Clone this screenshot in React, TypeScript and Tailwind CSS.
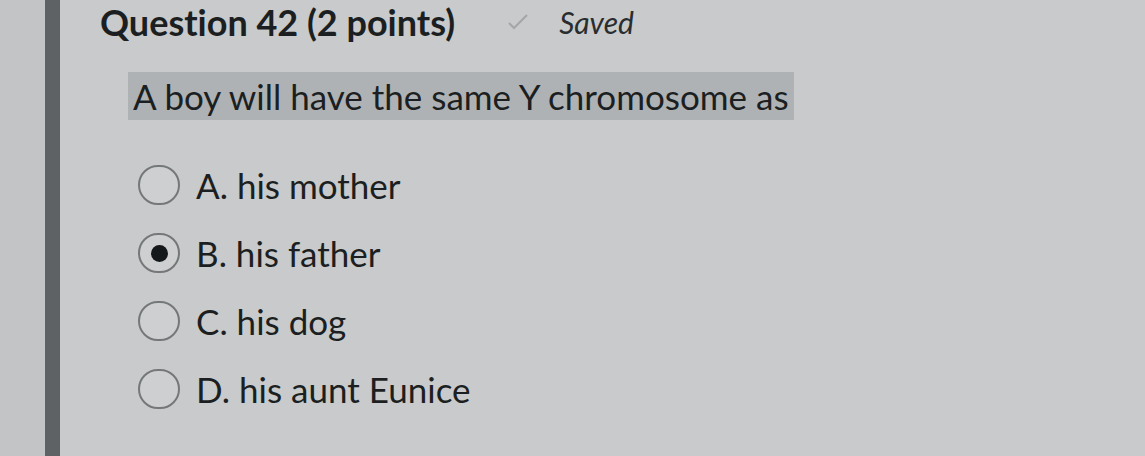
import { useState } from "react";

const options = [
  { key: "a", label: "A. his mother" },
  { key: "b", label: "B. his father" },
  { key: "c", label: "C. his dog" },
  { key: "d", label: "D. his aunt Eunice" },
];

function Radio({ checked }: { checked: boolean }) {
  return (
    <div className="w-[42px] h-[40px] rounded-full border-2 border-[#75787a] bg-[#cdcfd0] flex items-center justify-center shrink-0">
      {checked && <div className="w-[17px] h-[17px] rounded-full bg-[#15181a]" />}
    </div>
  );
}

export default function App() {
  const [answer, setAnswer] = useState("b");

  return (
    <div
      className="flex w-[1145px] h-[456px] bg-[#c8cacb] text-[#1c1f21] overflow-hidden [font-variant-ligatures:none]"
      style={{ fontFamily: "Lato, 'Open Sans', sans-serif" }}
    >
      {/* left edge of the screen + dark sidebar line */}
      <div className="w-[45px] shrink-0 bg-[#c2c4c5]" />
      <div className="w-[15px] shrink-0 bg-[#5f6265]" />

      <div className="flex-1 pl-[40px]">
        {/* header */}
        <div className="flex items-center h-[44px]">
          <div className="text-[36px] leading-none font-bold">Question 42 (2 points)</div>
          <div className="ml-[52px] flex items-center text-[#a3a7a9]">
            <svg width="22" height="18" viewBox="0 0 22 18" fill="none">
              <path d="M2 10l5 5L20 2" stroke="currentColor" strokeWidth="2" />
            </svg>
          </div>
          <div className="ml-[30px] text-[30px] italic text-[#2a2d2f] leading-none">Saved</div>
        </div>

        {/* question text */}
        <div className="mt-[28px] ml-[28px] inline-block bg-[#afb2b4] px-[5px] h-[48px] text-[35px] leading-[48px]">
          A boy will have the same Y chromosome as
        </div>

        {/* options */}
        <div className="mt-[44px] ml-[38px] flex flex-col gap-[26px]">
          {options.map((o) => (
            <label
              key={o.key}
              className="flex items-center gap-[16px] cursor-pointer"
              onClick={() => setAnswer(o.key)}
            >
              <Radio checked={answer === o.key} />
              <span className="text-[35px] leading-[42px]">{o.label}</span>
            </label>
          ))}
        </div>
      </div>
    </div>
  );
}
